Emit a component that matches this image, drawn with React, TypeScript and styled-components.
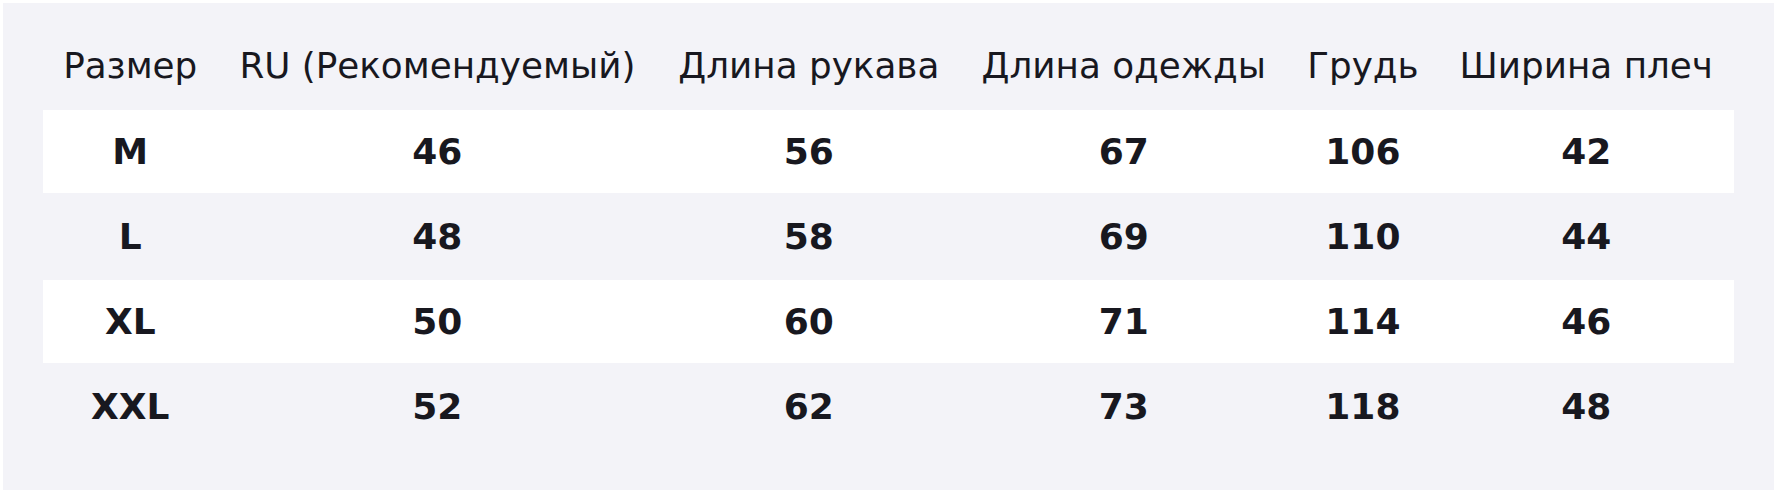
import styled, { createGlobalStyle } from "styled-components";

const GlobalStyle = createGlobalStyle`
  html, body {
    margin: 0;
    padding: 0;
    background: #ffffff;
  }
  body {
    font-family: "DejaVu Sans", "Liberation Sans", sans-serif;
  }
`;

const rows = [
  { size: "M", ru: 46, sleeve: 56, length: 67, chest: 106, shoulder: 42 },
  { size: "L", ru: 48, sleeve: 58, length: 69, chest: 110, shoulder: 44 },
  { size: "XL", ru: 50, sleeve: 60, length: 71, chest: 114, shoulder: 46 },
  { size: "XXL", ru: 52, sleeve: 62, length: 73, chest: 118, shoulder: 48 },
];

const headers = [
  "Размер",
  "RU (Рекомендуемый)",
  "Длина рукава",
  "Длина одежды",
  "Грудь",
  "Ширина плеч",
];

function App() {
  return (
    <Page>
      <GlobalStyle />
      <Panel>
        <Table>
          <thead>
            <tr>
              {headers.map((h) => (
                <HeadCell key={h}>{h}</HeadCell>
              ))}
            </tr>
          </thead>
          <tbody>
            {rows.map((r, i) => (
              <Row key={r.size} $striped={i % 2 === 0}>
                <Cell>{r.size}</Cell>
                <Cell>{r.ru}</Cell>
                <Cell>{r.sleeve}</Cell>
                <Cell>{r.length}</Cell>
                <Cell>{r.chest}</Cell>
                <Cell>{r.shoulder}</Cell>
              </Row>
            ))}
          </tbody>
        </Table>
      </Panel>
    </Page>
  );
}

export default App;
// ------------------------
const Page = styled.div`
  padding: 3px;
`;

const Panel = styled.div`
  width: 1771px;
  height: 487px;
  box-sizing: border-box;
  padding: 40px;
  background: #f3f3f8;
`;

const Table = styled.table`
  width: 100%;
  border-collapse: separate;
  border-spacing: 0 2px;
  color: #18181f;
`;

const HeadCell = styled.th`
  height: 63px;
  box-sizing: border-box;
  padding: 0 19px 21px;
  font-size: 35.75px;
  font-weight: 400;
  line-height: 42px;
  white-space: nowrap;
  text-align: center;
  vertical-align: top;
`;

const Row = styled.tr<{ $striped: boolean }>`
  background: ${(p) => (p.$striped ? "#ffffff" : "transparent")};
`;

const Cell = styled.td`
  height: 83px;
  box-sizing: border-box;
  padding: 0 19px;
  font-size: 36px;
  font-weight: 700;
  line-height: 42px;
  text-align: center;
  vertical-align: middle;
  white-space: nowrap;
`;
